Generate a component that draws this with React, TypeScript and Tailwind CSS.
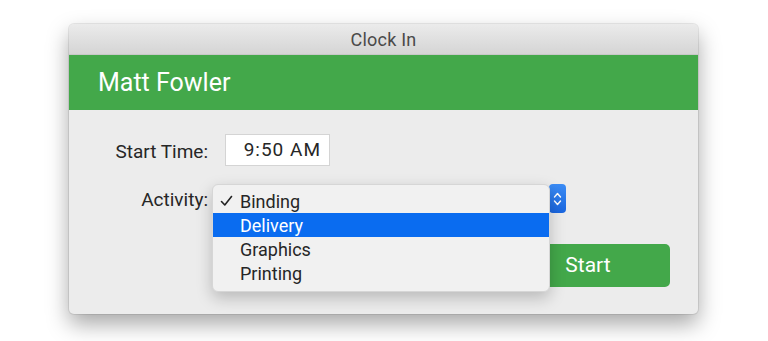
import type { JSX } from "react";

const ACTIVITIES = ["Binding", "Delivery", "Graphics", "Printing"];

function Check() {
  return (
    <svg width="13" height="12" viewBox="0 0 13 12" className="shrink-0">
      <path
        d="M1.5 6.5 L4.8 10 L11.5 1.5"
        fill="none"
        stroke="#222"
        strokeWidth="1.6"
        strokeLinecap="round"
        strokeLinejoin="round"
      />
    </svg>
  );
}

function Stepper() {
  return (
    <div className="flex h-[29px] w-[17px] items-center justify-center rounded-[4px] bg-gradient-to-b from-[#3b8cf5] to-[#1a66e0]">
      <svg width="9" height="16" viewBox="0 0 9 16">
        <path
          d="M1.5 6 L4.5 2.5 L7.5 6 M1.5 10 L4.5 13.5 L7.5 10"
          fill="none"
          stroke="#fff"
          strokeWidth="1.4"
          strokeLinecap="round"
          strokeLinejoin="round"
        />
      </svg>
    </div>
  );
}

function ActivityMenu() {
  return (
    <div className="absolute left-[-13px] top-[0px] w-[338px] rounded-[6px] border border-[#d6d6d6] bg-[#f1f1f1] pt-[4px] pb-[6px] shadow-[0_6px_16px_rgba(0,0,0,0.22)]">
      {ACTIVITIES.map((name, i) => (
        <div
          key={name}
          className={
            i === 1
              ? "flex h-[24px] items-center bg-[#0a6cf0] text-white"
              : "flex h-[24px] items-center text-[#262626]"
          }
        >
          <span className="flex w-[27px] justify-start pl-[7px]">{i === 0 && <Check />}</span>
          <span className="text-[18px]">{name}</span>
        </div>
      ))}
    </div>
  );
}

export default function App(): JSX.Element {
  return (
    <div className="min-h-[341px] bg-white pt-[24px] pl-[69px] font-['Roboto','Liberation_Sans',sans-serif]">
      <div className="h-[290px] w-[629px] rounded-[5px] bg-[#ececec] shadow-[0_10px_22px_rgba(0,0,0,0.35),0_0_0_1px_rgba(0,0,0,0.08)]">
        <div className="flex h-[31px] items-center justify-center rounded-t-[5px] border-b border-[#c8c8c8] bg-gradient-to-b from-[#ebebeb] to-[#d5d5d5] text-[18px] tracking-[0.2px] text-[#4a4a4a]">
          Clock In
        </div>
        <div className="flex h-[55px] items-center bg-[#43a84a] pl-[29px] text-[25px] text-white">
          Matt Fowler
        </div>
        <div className="grid grid-cols-[139px_1fr] items-center gap-x-[17px] pt-[24px] text-[19px] text-[#262626]">
          <div className="translate-y-[2px] text-right">Start Time:</div>
          <div className="flex h-[32px] w-[105px] items-center justify-end border border-[#d4d4d4] bg-white pr-[8px] tracking-[1px]">
            9:50 AM
          </div>

          <div className="mt-[18px] translate-y-[2px] text-right">Activity:</div>
          <div className="relative mt-[18px] flex h-[29px] w-[341px] justify-end">
            <Stepper />
            <ActivityMenu />
          </div>

          <div />
          <div className="mt-[31px] flex justify-end pr-[28px]">
            <div className="flex h-[43px] w-[164px] items-center justify-center rounded-[5px] bg-[#43a84a] text-[21px] text-white">
              Start
            </div>
          </div>
        </div>
      </div>
    </div>
  );
}
